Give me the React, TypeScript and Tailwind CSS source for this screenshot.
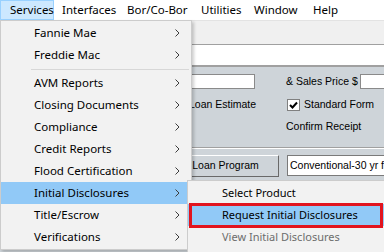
import React from 'react';

const menuFont = { fontFamily: '"Noto Sans", "Open Sans", sans-serif' };
const formFont = { fontFamily: '"Liberation Sans", Arial, sans-serif' };

const barItems = [
  { label: 'Services', cls: 'w-[54px] pl-[9px] bg-[#cce8ff] border border-[#99d1ff]' },
  { label: 'Interfaces', cls: 'w-[65px] pl-[8px]' },
  { label: 'Bor/Co-Bor', cls: 'w-[74px] pl-[8px]' },
  { label: 'Utilities', cls: 'w-[53px] pl-[8px]' },
  { label: 'Window', cls: 'w-[59px] pl-[8px]' },
  { label: 'Help', cls: 'w-[40px] pl-[8px]' },
];

const mainItems = [
  'Fannie Mae',
  'Freddie Mac',
  '-',
  'AVM Reports',
  'Closing Documents',
  'Compliance',
  'Credit Reports',
  'Flood Certification',
  'Initial Disclosures',
  'Title/Escrow',
  'Verifications',
];

function Chevron() {
  return (
    <svg width="5" height="8" viewBox="0 0 5 8" className="shrink-0">
      <path d="M0.5 0.5 L4 4 L0.5 7.5" fill="none" stroke="#3c3c3c" strokeWidth="1" />
    </svg>
  );
}

function FormBackground() {
  return (
    <div className="flex flex-col">
      {/* toolbar strip */}
      <div className="h-[25px] bg-[#f0f0f0] border-t border-[#e3e3e3] border-b border-b-[#a0a0a0]" />
      <div className="h-[22px] bg-white border-b-2 border-[#a0a0a0]" />
      <div className="h-[185px] bg-[#ced4d9] flex flex-col text-[10.5px] text-black whitespace-nowrap overflow-hidden" style={formFont}>
        <div className="flex mt-[7px] h-[15px] pl-[120px]">
          <div className="shrink-0 w-[135px] h-[15px] bg-white border border-[#8a8a8a]" />
          <div className="shrink-0 ml-[31px] leading-[15px]">&amp; Sales Price $</div>
          <div className="shrink-0 ml-[2px] w-[40px] h-[15px] bg-white border border-[#8a8a8a]" />
        </div>
        <div className="flex mt-[9px] h-[14px] items-center pl-[189px]">
          <div className="shrink-0 w-[98px]">Loan Estimate</div>
          <div className="shrink-0 w-[13px] h-[12px] bg-white border border-[#808080] flex items-center justify-center">
            <svg width="9" height="8" viewBox="0 0 9 8">
              <path d="M1 4 L3.5 6.5 L8 1.5" fill="none" stroke="#000" strokeWidth="2" />
            </svg>
          </div>
          <div className="shrink-0 ml-[4px]">Standard Form</div>
        </div>
        <div className="flex mt-[8px] h-[14px] items-center pl-[286px]">
          <div>Confirm Receipt</div>
        </div>
        <div className="mt-[13px] h-[2px] border-t border-[#a0a0a0] border-b border-b-white" />
        <div className="flex mt-[6px] h-[22px] pl-[172px]">
          <div className="shrink-0 w-[107px] h-[22px] border border-t-white border-l-white border-r-[#696969] border-b-[#696969] flex items-center justify-center">
            Loan Program
          </div>
          <div className="shrink-0 ml-[8px] w-[120px] h-[21px] bg-white border border-[#7a7a7a] flex items-center pl-[2px] overflow-hidden">
            Conventional-30 yr fi
          </div>
        </div>
      </div>
    </div>
  );
}

export default function App() {
  return (
    <div className="relative w-[384px] h-[252px] overflow-hidden bg-white">
      <div className="flex h-[20px] bg-white text-[11.5px] text-black" style={menuFont}>
        {barItems.map((b) => (
          <div key={b.label} className={'shrink-0 flex items-center h-[20px] whitespace-nowrap ' + b.cls}>
            {b.label}
          </div>
        ))}
      </div>
      <FormBackground />

      {/* Services dropdown */}
      <div
        className="absolute left-0 top-[20px] w-[192px] bg-[#f2f2f2] border border-[#cccccc] py-[1px] text-[11.5px] text-black shadow-[2px_2px_3px_rgba(0,0,0,0.2)]"
        style={menuFont}
      >
        {mainItems.map((it, i) =>
          it === '-' ? (
            <div key={i} className="h-[6px] flex items-center pl-[30px] pr-[2px]">
              <div className="h-px w-full bg-[#d7d7d7]" />
            </div>
          ) : (
            <div
              key={i}
              className={
                'h-[22px] flex items-center pl-[33px] pr-[11px] whitespace-nowrap ' +
                (it === 'Initial Disclosures' ? 'bg-[#91c9f7]' : '')
              }
            >
              <span className="flex-1">{it}</span>
              <Chevron />
            </div>
          )
        )}
      </div>

      {/* Initial Disclosures submenu */}
      <div
        className="absolute left-[187px] top-[180px] w-[210px] h-[80px] bg-[#f2f2f2] border border-[#cccccc] py-[1px] text-[11px] text-black"
        style={menuFont}
      >
        <div className="h-[22px] flex items-center pl-[34px] whitespace-nowrap">Select Product</div>
        <div className="h-[22px] flex items-center pl-[34px] whitespace-nowrap bg-[#91c9f7]">
          Request Initial Disclosures
        </div>
        <div className="h-[22px] flex items-center pl-[34px] whitespace-nowrap text-[#6d6d6d]">
          View Initial Disclosures
        </div>
      </div>

      {/* highlight annotation box */}
      <div className="absolute left-[189px] top-[203px] w-[194px] h-[25px] border-[3px] border-[#e2141e]" />
    </div>
  );
}
